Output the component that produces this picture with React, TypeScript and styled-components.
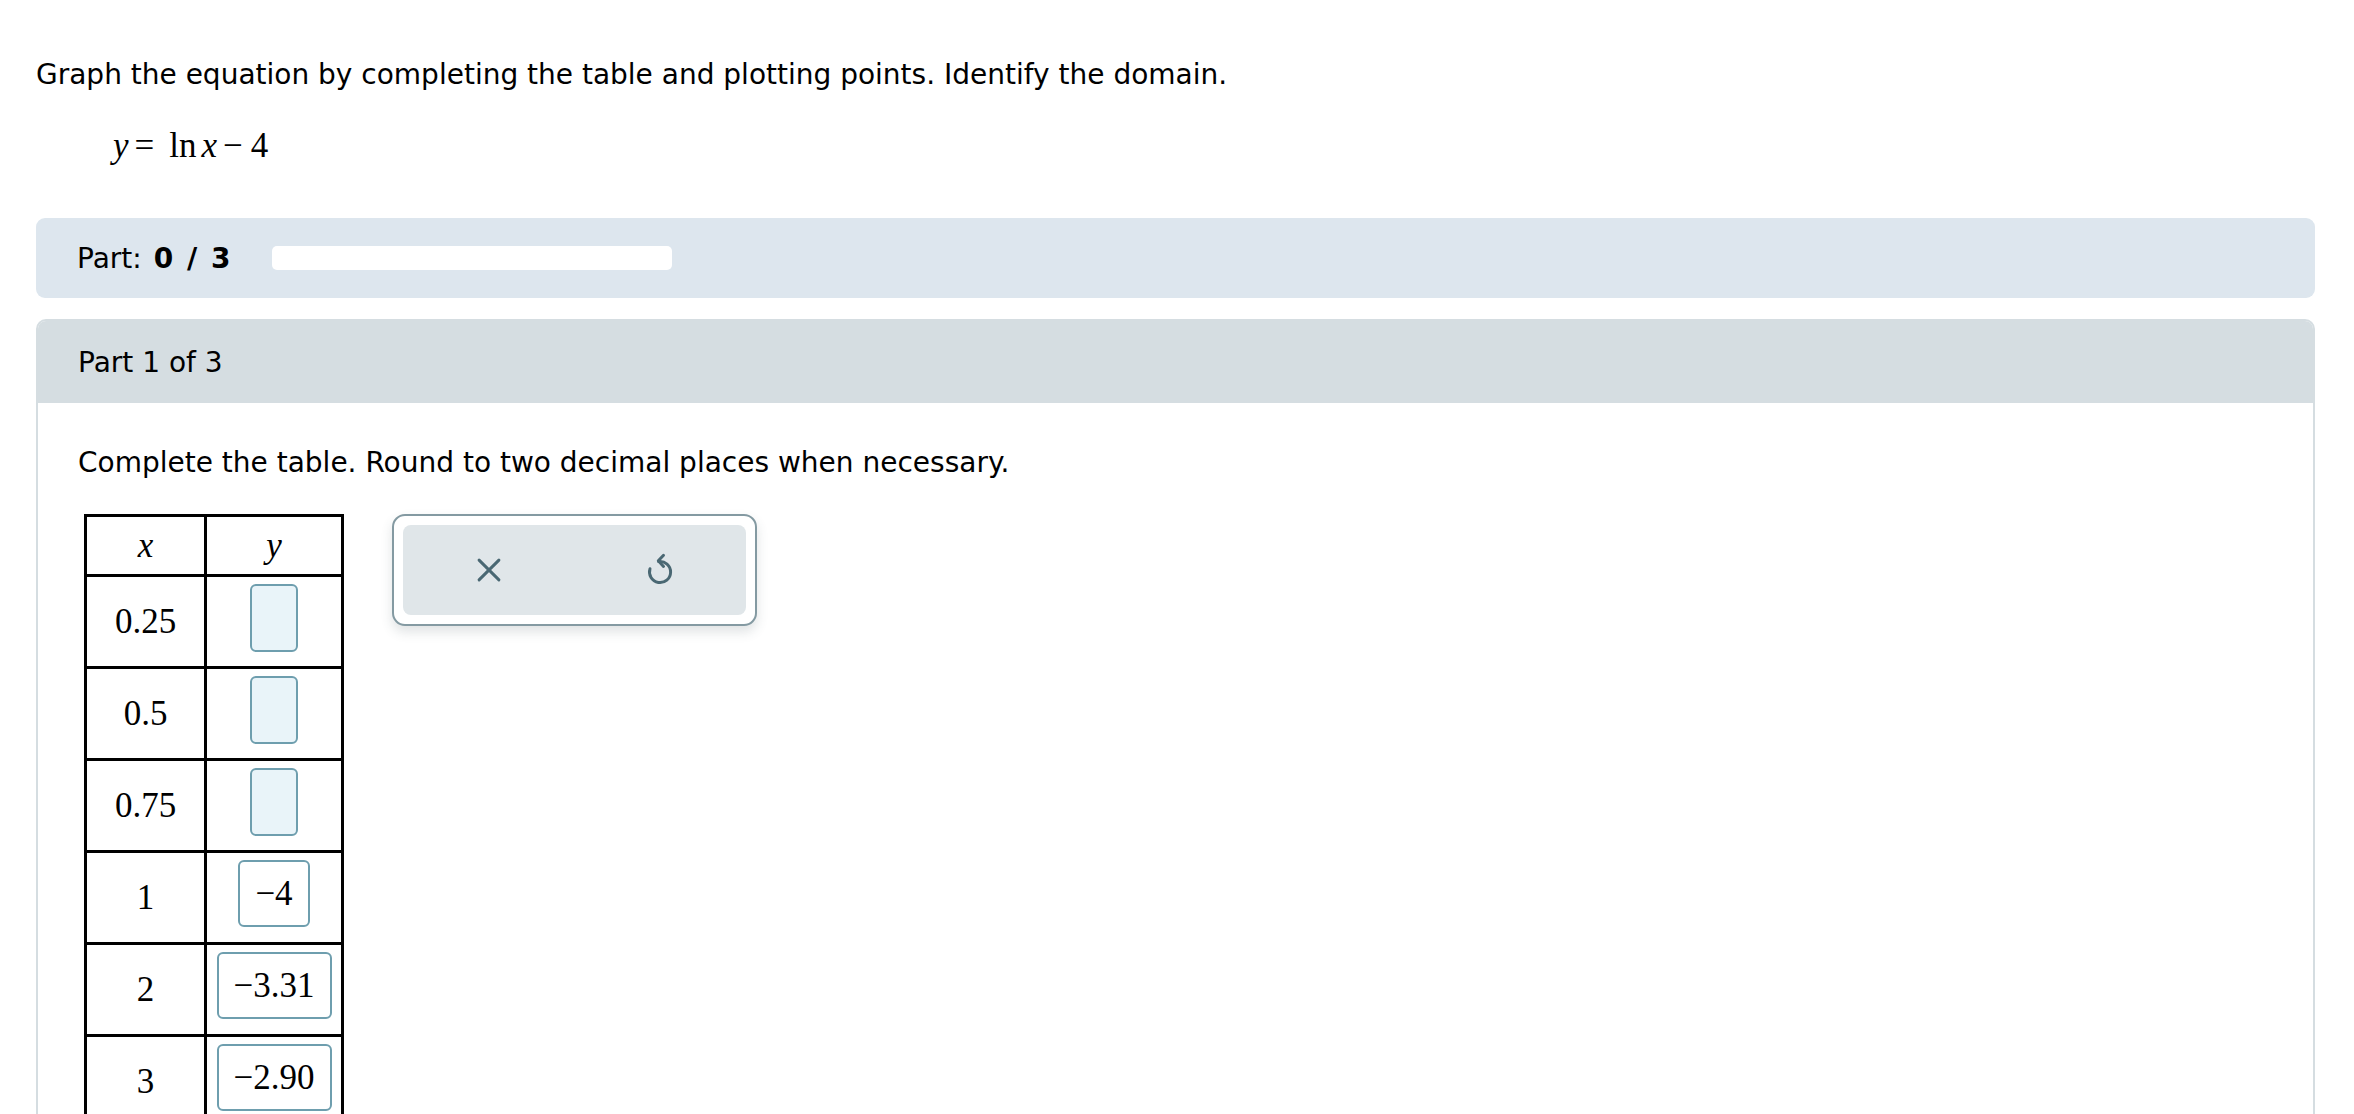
import React from 'react';
import styled, { createGlobalStyle } from 'styled-components';

const GlobalStyle = createGlobalStyle`
  html, body {
    margin: 0;
    padding: 0;
    background: #ffffff;
  }
  body {
    font-family: "DejaVu Sans", Verdana, sans-serif;
    color: #000000;
  }
`;

interface Row {
  x: string;
  y?: string;
}

const rows: Row[] = [
  { x: '0.25' },
  { x: '0.5' },
  { x: '0.75' },
  { x: '1', y: '\u22124' },
  { x: '2', y: '\u22123.31' },
  { x: '3', y: '\u22122.90' },
];

const CloseIcon = () => (
  <svg width="34" height="34" viewBox="0 0 24 24" fill="none" stroke="currentColor" strokeWidth="2.1" strokeLinecap="round">
    <path d="M5 5 L19 19 M19 5 L5 19" />
  </svg>
);

const UndoIcon = () => (
  <svg width="34" height="38" viewBox="0 0 24 27" fill="none" stroke="currentColor" strokeWidth="2.1" strokeLinecap="round" strokeLinejoin="round">
    <path d="M14.5 3 L10.8 7 L14.5 11" />
    <path d="M11 7.5 A7.5 7.5 0 1 1 4.9 12.6" />
  </svg>
);

const App: React.FC = () => {
  return (
    <Page>
      <GlobalStyle />
      <Prompt>Graph the equation by completing the table and plotting points. Identify the domain.</Prompt>
      <Equation>
        <Var>y</Var>
        <Op>=</Op>
        <Fn>ln</Fn>
        <Var>x</Var>
        <Op>{'\u2212'}</Op>
        <span>4</span>
      </Equation>

      <ProgressBanner>
        <span>Part:</span>
        <PartCount>0 / 3</PartCount>
        <ProgressTrack />
      </ProgressBanner>

      <Card>
        <CardHeader>Part 1 of 3</CardHeader>
        <CardBody>
          <Instruction>Complete the table. Round to two decimal places when necessary.</Instruction>
          <WorkArea>
            <ValueTable>
              <thead>
                <tr>
                  <HeadCell><i>x</i></HeadCell>
                  <HeadCell><i>y</i></HeadCell>
                </tr>
              </thead>
              <tbody>
                {rows.map((row) => (
                  <tr key={row.x}>
                    <Cell>{row.x}</Cell>
                    <Cell $raised>
                      {row.y ? <AnswerBox>{row.y}</AnswerBox> : <EmptyBox />}
                    </Cell>
                  </tr>
                ))}
              </tbody>
            </ValueTable>

            <Toolbar>
              <ToolGroup>
                <ToolButton aria-label="Clear"><CloseIcon /></ToolButton>
                <ToolButton aria-label="Undo"><UndoIcon /></ToolButton>
              </ToolGroup>
            </Toolbar>
          </WorkArea>
        </CardBody>
      </Card>
    </Page>
  );
};

const Page = styled.div`
  padding: 54px 39px 60px 36px;
`;

const Prompt = styled.p`
  margin: 0;
  font-size: 28px;
  line-height: 42px;
`;

const Equation = styled.div`
  margin: 30px 0 0 77px;
  font-family: "Liberation Serif", "Times New Roman", serif;
  font-size: 35px;
  line-height: 40px;
  display: flex;
  align-items: baseline;
`;

const Var = styled.i`
  font-style: italic;
`;

const Op = styled.span`
  margin: 0 8px 0 6px;
`;

const Fn = styled.span`
  margin: 0 5px 0 7px;
`;

const ProgressBanner = styled.div`
  margin-top: 52px;
  height: 80px;
  background: #dde6ee;
  border-radius: 9px;
  display: flex;
  align-items: center;
  padding-left: 41px;
  font-size: 28px;
`;

const PartCount = styled.b`
  margin-left: 12px;
  font-weight: 700;
  word-spacing: 4px;
`;

const ProgressTrack = styled.div`
  margin-left: 42px;
  width: 400px;
  height: 24px;
  background: #ffffff;
  border-radius: 5px;
`;

const Card = styled.section`
  margin-top: 21px;
  border: 2px solid #d5dde1;
  border-radius: 10px 10px 0 0;
  overflow: hidden;
`;

const CardHeader = styled.div`
  height: 82px;
  background: #d5dde1;
  display: flex;
  align-items: center;
  padding-left: 40px;
  font-size: 28px;
`;

const CardBody = styled.div`
  padding: 39px 40px 80px 40px;
`;

const Instruction = styled.p`
  margin: 0;
  font-size: 28px;
  line-height: 42px;
`;

const WorkArea = styled.div`
  margin-top: 30px;
  margin-left: 6px;
  display: flex;
  align-items: flex-start;
  gap: 48px;
`;

const ValueTable = styled.table`
  border-collapse: collapse;
  font-family: "Liberation Serif", "Times New Roman", serif;
  font-size: 35px;
  border: 3px solid #000000;
`;

const HeadCell = styled.th`
  border: 3px solid #000000;
  height: 57px;
  font-weight: 400;
  padding: 0;
  &:first-child { width: 117px; }
  &:last-child { width: 134px; }
`;

const Cell = styled.td<{ $raised?: boolean }>`
  border: 3px solid #000000;
  height: ${(p) => (p.$raised ? '81px' : '89px')};
  padding: 0 0 ${(p) => (p.$raised ? '8px' : '0')};
  text-align: center;
  vertical-align: middle;
`;

const EmptyBox = styled.div`
  margin: 0 auto;
  width: 44px;
  height: 64px;
  border: 2px solid #6e9eae;
  border-radius: 6px;
  background: #e9f4f9;
`;

const AnswerBox = styled.div`
  display: inline-flex;
  align-items: center;
  justify-content: center;
  height: 63px;
  padding: 0 15px;
  border: 2px solid #6e9eae;
  border-radius: 6px;
  background: #ffffff;
  line-height: 1;
`;

const Toolbar = styled.div`
  width: 343px;
  height: 90px;
  padding: 9px;
  background: #ffffff;
  border: 2px solid #849aa2;
  border-radius: 13px;
  box-shadow: 0 6px 12px rgba(60, 80, 90, 0.16);
`;

const ToolGroup = styled.div`
  height: 100%;
  background: #e0e6e9;
  border-radius: 8px;
  display: grid;
  grid-template-columns: 1fr 1fr;
  align-items: center;
`;

const ToolButton = styled.button`
  background: none;
  border: none;
  padding: 0;
  color: #4a6873;
  display: flex;
  justify-content: center;
  align-items: center;
  cursor: pointer;
`;

export default App;
